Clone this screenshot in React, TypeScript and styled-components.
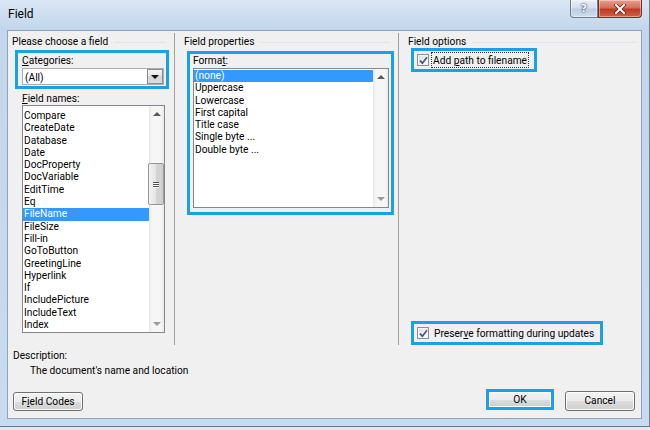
import React from "react";
import styled, { createGlobalStyle } from "styled-components";

const GlobalStyle = createGlobalStyle`
  html, body {
    margin: 0;
    padding: 0;
    background: #e4e9ef;
  }
  body {
    font-family: Roboto, "Noto Sans", "Liberation Sans", sans-serif;
    font-size: 10.2px;
    color: #000;
  }
`;

const HILITE = "#19a0e6";

const Window = styled.div`
  width: 650px;
  height: 427px;
  box-sizing: border-box;
  display: flex;
  flex-direction: column;
  padding: 0 7px 7px 7px;
  background: linear-gradient(#d9e6f4, #c3d6eb 30px, #c9dbee);
  border-right: 1px solid #6f849c;
  border-bottom: 1px solid #5f7590;
`;

const TitleBar = styled.div`
  height: 30px;
  display: flex;
  align-items: flex-start;
  flex-shrink: 0;
`;

const Title = styled.div`
  font-size: 12px;
  line-height: 12px;
  margin-top: 8px;
  margin-left: 1px;
`;

const CaptionButtons = styled.div`
  margin-left: auto;
  display: flex;
`;

const CaptionButton = styled.div<{ $variant: "help" | "close" }>`
  width: ${(p) => (p.$variant === "close" ? 44 : 28)}px;
  height: 18px;
  box-sizing: border-box;
  display: flex;
  align-items: center;
  justify-content: center;
  border: 1px solid ${(p) => (p.$variant === "close" ? "#7a2a1e" : "#6d7f96")};
  border-top: none;
  border-radius: ${(p) => (p.$variant === "close" ? "0 0 4px 0" : "0 0 0 4px")};
  background: ${(p) =>
    p.$variant === "close"
      ? "linear-gradient(180deg, #e7a08c 0%, #d4705a 45%, #bd3b26 55%, #cf5f46 100%)"
      : "linear-gradient(180deg, #e9f0f8 0%, #d3e0ee 45%, #bccee2 55%, #cfdeee 100%)"};
  box-shadow: inset 0 0 0 1px rgba(255, 255, 255, 0.4);
`;

const HelpGlyph = styled.span`
  font-family: "DejaVu Sans", sans-serif;
  font-weight: bold;
  font-size: 11px;
  line-height: 11px;
  color: #fff;
  text-shadow: 0 0 2px #26374e, 0 0 1px #26374e;
`;

const Client = styled.div`
  flex: 1;
  display: flex;
  flex-direction: column;
  background: #f0f0f0;
  border: 1px solid #8fa3bb;
`;

const Groups = styled.div`
  height: 314px;
  display: flex;
  flex-shrink: 0;
`;

const Column = styled.div<{ $width?: number; $padLeft: number; $padRight: number; $last?: boolean }>`
  ${(p) => (p.$width ? `width: ${p.$width}px;` : "flex: 1;")}
  box-sizing: border-box;
  display: flex;
  flex-direction: column;
  align-items: flex-start;
  padding: 4px ${(p) => p.$padRight}px 0 ${(p) => p.$padLeft}px;
  border-right: ${(p) => (p.$last ? "none" : "1px solid #a0a0a0")};
  margin-top: 2px;
`;

const GroupHeader = styled.div`
  align-self: stretch;
  display: flex;
  align-items: center;
  height: 12px;
  line-height: 12px;
  margin-top: -1px;
  &::after {
    content: "";
    flex: 1;
    height: 1px;
    margin-left: 6px;
    background: #dfe5ea;
  }
`;

const Highlight = styled.div<{ $top: number; $width?: number }>`
  box-sizing: border-box;
  margin-top: ${(p) => p.$top}px;
  margin-left: 3px;
  ${(p) => (p.$width ? `width: ${p.$width}px;` : "")}
  border: 3px solid ${HILITE};
  display: flex;
  flex-direction: column;
`;

const FieldLabel = styled.div<{ $indent: number; $top?: number }>`
  height: 12px;
  line-height: 12px;
  margin-left: ${(p) => p.$indent}px;
  margin-top: ${(p) => p.$top ?? 0}px;
  white-space: nowrap;
`;

const U = styled.span`
  text-decoration: underline;
  text-underline-offset: 1px;
`;

const Combo = styled.div`
  margin: 1px 0 1px 4px;
  width: 142px;
  height: 17px;
  box-sizing: border-box;
  border: 1px solid #abadb3;
  background: #fff;
  display: flex;
  align-items: center;
`;

const ComboText = styled.div`
  flex: 1;
  padding-left: 2px;
  line-height: 15px;
  padding-top: 1px;
`;

const ComboButton = styled.div`
  width: 16px;
  height: 15px;
  box-sizing: border-box;
  border: 1px solid #8b8b8b;
  background: linear-gradient(#f4f4f4, #e4e4e4 50%, #d4d4d4 50%, #dcdcdc);
  display: flex;
  align-items: center;
  justify-content: center;
`;

const Triangle = styled.div<{ $up?: boolean; $color?: string }>`
  width: 0;
  height: 0;
  border-left: 4px solid transparent;
  border-right: 4px solid transparent;
  ${(p) =>
    p.$up
      ? `border-bottom: 4px solid ${p.$color ?? "#4a4a4a"};`
      : `border-top: 4px solid ${p.$color ?? "#4a4a4a"};`}
`;

const ListBox = styled.div<{ $width: number; $height: number; $indent: number; $top: number }>`
  width: ${(p) => p.$width}px;
  height: ${(p) => p.$height}px;
  margin-left: ${(p) => p.$indent}px;
  margin-top: ${(p) => p.$top}px;
  box-sizing: border-box;
  border: 1px solid #828790;
  background: #fff;
  display: flex;
  overflow: hidden;
  flex-shrink: 0;
`;

const Items = styled.div<{ $padTop: number }>`
  flex: 1;
  min-width: 0;
  padding-top: ${(p) => p.$padTop}px;
`;

const Item = styled.div<{ $selected?: boolean }>`
  height: 12.3px;
  line-height: 12.3px;
  padding-left: 2px;
  margin-left: -1px;
  white-space: nowrap;
  background: ${(p) => (p.$selected ? "#3399ff" : "transparent")};
  color: ${(p) => (p.$selected ? "#fff" : "#000")};
`;

const ScrollBar = styled.div`
  width: 15px;
  flex-shrink: 0;
  display: flex;
  flex-direction: column;
  background: linear-gradient(90deg, #e6e6e6, #f6f6f6 20%, #f6f6f6 80%, #e9e9e9);
`;

const ScrollArrow = styled.div`
  height: 16px;
  display: flex;
  align-items: center;
  justify-content: center;
`;

const Track = styled.div`
  flex: 1;
  display: flex;
  flex-direction: column;
`;

const Thumb = styled.div<{ $top: number; $height: number }>`
  margin-top: ${(p) => p.$top}px;
  height: ${(p) => p.$height}px;
  margin-left: -1px;
  box-sizing: border-box;
  border: 1px solid #979797;
  border-radius: 2px;
  background: linear-gradient(90deg, #f2f2f2, #e4e4e4 50%, #d4d4d4 50%, #cfcfcf);
  display: flex;
  flex-direction: column;
  align-items: center;
  justify-content: center;
  gap: 1px;
`;

const Grip = styled.div`
  width: 6px;
  height: 1px;
  background: #505050;
  box-shadow: 0 1px 0 #fff;
`;

const CheckRow = styled.div<{ $padRight: number }>`
  height: 18px;
  display: flex;
  align-items: center;
  padding: 0 ${(p) => p.$padRight}px 0 3px;
`;

const Box = styled.div`
  width: 12px;
  height: 12px;
  box-sizing: border-box;
  border: 1px solid #8e8f8f;
  background: linear-gradient(135deg, #dcdcdc, #ffffff);
  box-shadow: inset 0 0 0 1px #f4f4f4;
  display: flex;
  align-items: center;
  justify-content: center;
  flex-shrink: 0;
`;

const CheckText = styled.div<{ $focus?: boolean }>`
  margin-left: ${(p) => (p.$focus ? 2 : 3)}px;
  padding: 1px 1px 0 1px;
  line-height: 13px;
  border: 1px ${(p) => (p.$focus ? "dotted #333" : "solid transparent")};
  white-space: nowrap;
`;

const Spacer = styled.div`
  flex: 1;
`;

const DescLabel = styled.div`
  margin: 5px 0 0 5px;
  line-height: 12px;
`;

const DescText = styled.div`
  margin: 3px 0 0 22px;
  line-height: 12px;
`;

const Footer = styled.div`
  margin-top: auto;
  display: flex;
  align-items: flex-end;
  padding: 0 6px 7px 5px;
`;

const Button = styled.div<{ $width: number; $height?: number }>`
  width: ${(p) => p.$width}px;
  height: ${(p) => p.$height ?? 20}px;
  box-sizing: border-box;
  border: 1px solid #707070;
  border-radius: 3px;
  background: linear-gradient(#f2f2f2, #ebebeb 50%, #dddddd 50%, #cfcfcf);
  box-shadow: inset 0 0 0 1px rgba(255, 255, 255, 0.8);
  display: flex;
  align-items: center;
  justify-content: center;
  line-height: 12px;
`;

const ButtonRing = styled.div`
  border: 3px solid ${HILITE};
  margin-right: 11px;
  margin-bottom: 1px;
  display: flex;
`;

const FlatButton = styled(Button)`
  border: none;
  border-radius: 0;
  box-shadow: inset 0 0 0 1px #fff;
`;

function CheckMark() {
  return (
    <svg width="9" height="9" viewBox="0 0 9 9">
      <path d="M1 4.6 L3.4 7.2 L8 1.2" fill="none" stroke="#3f5790" strokeWidth="1.7" />
    </svg>
  );
}

function CloseIcon() {
  return (
    <svg width="12" height="10" viewBox="0 0 12 10">
      <path d="M2 1 L10 9 M10 1 L2 9" stroke="#5b1b10" strokeWidth="3.4" strokeLinecap="square" />
      <path d="M2 1 L10 9 M10 1 L2 9" stroke="#ffffff" strokeWidth="2" strokeLinecap="square" />
    </svg>
  );
}

function VScroll({ thumbTop, thumbHeight }: { thumbTop?: number; thumbHeight?: number }) {
  return (
    <ScrollBar>
      <ScrollArrow>
        <Triangle $up $color="#5a5a5a" />
      </ScrollArrow>
      <Track>
        {thumbHeight ? (
          <Thumb $top={thumbTop ?? 0} $height={thumbHeight}>
            <Grip />
            <Grip />
            <Grip />
          </Thumb>
        ) : null}
      </Track>
      <ScrollArrow>
        <Triangle $color="#9a9a9a" />
      </ScrollArrow>
    </ScrollBar>
  );
}

const fieldNames = [
  "Compare",
  "CreateDate",
  "Database",
  "Date",
  "DocProperty",
  "DocVariable",
  "EditTime",
  "Eq",
  "FileName",
  "FileSize",
  "Fill-in",
  "GoToButton",
  "GreetingLine",
  "Hyperlink",
  "If",
  "IncludePicture",
  "IncludeText",
  "Index",
];

const formats = [
  "(none)",
  "Uppercase",
  "Lowercase",
  "First capital",
  "Title case",
  "Single byte ...",
  "Double byte ...",
];

export default function App() {
  return (
    <>
      <GlobalStyle />
      <Window>
        <TitleBar>
          <Title>Field</Title>
          <CaptionButtons>
            <CaptionButton $variant="help">
              <HelpGlyph>?</HelpGlyph>
            </CaptionButton>
            <CaptionButton $variant="close">
              <CloseIcon />
            </CaptionButton>
          </CaptionButtons>
        </TitleBar>
        <Client>
          <Groups>
            <Column $width={167} $padLeft={4} $padRight={8}>
              <GroupHeader>Please choose a field</GroupHeader>
              <Highlight $top={2} $width={154}>
                <FieldLabel $indent={4} $top={2}>
                  <U>C</U>ategories:
                </FieldLabel>
                <Combo>
                  <ComboText>(All)</ComboText>
                  <ComboButton>
                    <Triangle $color="#111" />
                  </ComboButton>
                </Combo>
              </Highlight>
              <FieldLabel $indent={10} $top={4}>
                <U>F</U>ield names:
              </FieldLabel>
              <ListBox $width={143} $height={228} $indent={10} $top={0}>
                <Items $padTop={4}>
                  {fieldNames.map((name) => (
                    <Item key={name} $selected={name === "FileName"}>
                      {name}
                    </Item>
                  ))}
                </Items>
                <VScroll thumbTop={41} thumbHeight={42} />
              </ListBox>
            </Column>

            <Column $width={224} $padLeft={9} $padRight={8}>
              <GroupHeader>Field properties</GroupHeader>
              <Highlight $top={3} $width={207}>
                <FieldLabel $indent={3} $top={1}>
                  Forma<U>t</U>:
                </FieldLabel>
                <ListBox $width={196} $height={140} $indent={3} $top={1}>
                  <Items $padTop={1}>
                    {formats.map((f) => (
                      <Item key={f} $selected={f === "(none)"}>
                        {f}
                      </Item>
                    ))}
                  </Items>
                  <VScroll />
                </ListBox>
                <Spacer style={{ minHeight: 4 }} />
              </Highlight>
            </Column>

            <Column $padLeft={9} $padRight={6} $last>
              <GroupHeader>Field options</GroupHeader>
              <Highlight $top={0}>
                <CheckRow $padRight={5}>
                  <Box>
                    <CheckMark />
                  </Box>
                  <CheckText $focus>
                    Add <U>p</U>ath to filename
                  </CheckText>
                </CheckRow>
              </Highlight>
              <Spacer />
              <Highlight $top={0}>
                <CheckRow $padRight={4}>
                  <Box>
                    <CheckMark />
                  </Box>
                  <CheckText>
                    Preser<U>v</U>e formatting during updates
                  </CheckText>
                </CheckRow>
              </Highlight>
            </Column>
          </Groups>

          <DescLabel>Description:</DescLabel>
          <DescText>The document's name and location</DescText>

          <Footer>
            <Button $width={70} $height={19}>
              F<U>i</U>eld Codes
            </Button>
            <Spacer />
            <ButtonRing>
              <FlatButton $width={62} $height={15}>
                OK
              </FlatButton>
            </ButtonRing>
            <Button $width={70}>Cancel</Button>
          </Footer>
        </Client>
      </Window>
    </>
  );
}
